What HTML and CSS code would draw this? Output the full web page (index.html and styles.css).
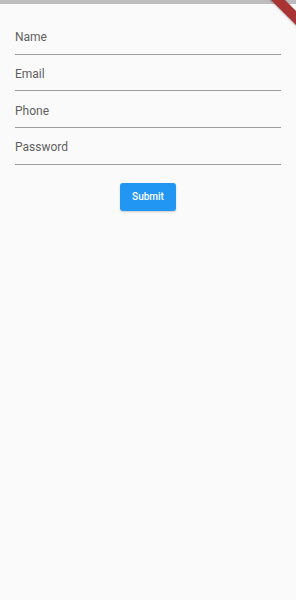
FILE: index.html
```html
<!DOCTYPE html>
<html lang="en">
<head>
    <meta charset="UTF-8">
    <meta name="viewport" content="width=device-width, initial-scale=1.0">
    <title>Form</title>
    <link rel="stylesheet" href="styles.css">
</head>
<body>
    <div class="status-bar"></div>
    <div class="debug-banner"></div>

    <form class="form" onsubmit="return false;">
        <div class="field"><label>Name</label></div>
        <div class="field"><label>Email</label></div>
        <div class="field"><label>Phone</label></div>
        <div class="field"><label>Password</label></div>

        <div class="button-row">
            <button class="btn-submit" type="submit">Submit</button>
        </div>
    </form>
</body>
</html>
```

FILE: styles.css
```css
* {
    box-sizing: border-box;
    margin: 0;
    padding: 0;
    font-family: Roboto, "Noto Sans", sans-serif;
}

body {
    background: #fafafa;
    width: 296px;
    height: 600px;
    overflow: hidden;
    position: relative;
}

.status-bar {
    height: 4px;
    background: #bdbdbd;
}

/* flutter debug ribbon in the corner */
.debug-banner {
    position: absolute;
    top: 4px;
    right: -15px;
    width: 48px;
    height: 10px;
    background: #a83434;
    transform: rotate(45deg);
    box-shadow: 0 1px 2px rgba(0,0,0,0.2);
}

.form {
    padding: 14px 15px 0;
}

.field {
    height: 36.67px;
    display: flex;
    align-items: center;
    border-bottom: 1px solid #9e9e9e;
}

.field label {
    font-size: 12px;
    color: #5f5f5f;
    padding-top: 3px;
}

.button-row {
    display: flex;
    justify-content: center;
    margin-top: 18px;
}

.btn-submit {
    width: 56px;
    height: 28px;
    border: none;
    border-radius: 3px;
    background: #2196f3;
    color: #fff;
    font-size: 10px;
    font-weight: 500;
    box-shadow: 0 1px 2px rgba(0,0,0,0.2);
    cursor: pointer;
}
```
